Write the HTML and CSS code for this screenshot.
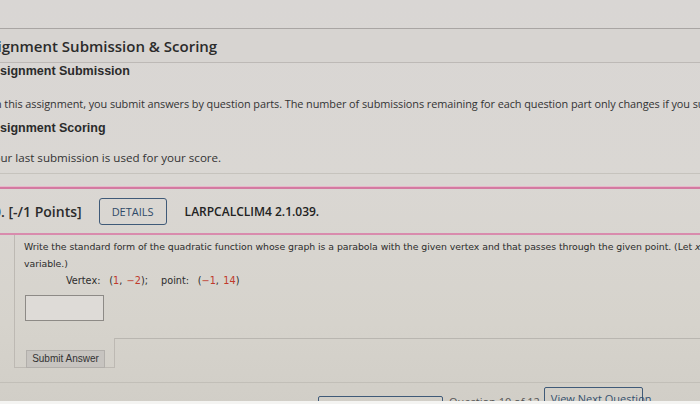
FILE: index.html
```html
<!DOCTYPE html>
<html>
<head>
<meta charset="utf-8">
<link rel="stylesheet" href="styles.css">
</head>
<body>
<div class="page">
  <div class="topbar"></div>
  <div class="sechead"><h1>Assignment Submission &amp; Scoring</h1></div>
  <div class="info">
    <h2 class="sub">Assignment Submission</h2>
    <p class="txt one">In this assignment, you submit answers by question parts. The number of submissions remaining for each question part only changes if you submit or change the answer.</p>
    <h2 class="sub second">Assignment Scoring</h2>
    <p class="txt two">Your last submission is used for your score.</p>
  </div>
  <div class="rule-grey"></div>
  <div class="rule-pink"></div>
  <div class="qhead">
    <span class="pts">10. [-/1 Points]</span>
    <span class="details">DETAILS</span>
    <span class="qid">LARPCALCLIM4 2.1.039.</span>
  </div>
  <div class="rule-pink thin"></div>
  <div class="qbody">
    <p class="qtext">Write the standard form of the quadratic function whose graph is a parabola with the given vertex and that passes through the given point. (Let <i>x</i> be the independent variable.)</p>
    <p class="given">Vertex: &nbsp;(<span class="red">1</span>, <span class="red">−2</span>); &nbsp; point: &nbsp;(<span class="red">−1</span>, <span class="red">14</span>)</p>
    <div class="answer"></div>
  </div>
  <div class="qfoot">
    <div class="submit-cell"><span class="submit">Submit Answer</span></div>
    <div class="fill"></div>
  </div>
  <div class="rule-bottom"></div>
  <div class="nav">
    <span class="navbtn prev">View Previous Question</span>
    <span class="count">Question 10 of 12</span>
    <span class="navbtn next">View Next Question</span>
  </div>
  <div class="whitestrip"></div>
</div>
</body>
</html>
```
FILE: styles.css
```css
html, body {
  margin: 0;
  padding: 0;
}
body {
  width: 700px;
  height: 404px;
  overflow: hidden;
  background: #d8d5d1;
  font-family: "Open Sans", "Liberation Sans", sans-serif;
  color: #2a2a2a;
}
.page {
  width: 700px;
  height: 404px;
  overflow: hidden;
  background: linear-gradient(180deg, #d9d6d4 0%, #dad7d3 45%, #d6d3cc 80%, #d1cec7 100%);
  position: relative;
}
.topbar {
  height: 28px;
  border-bottom: 1px solid #a9a5a3;
}
.sechead {
  height: 33px;
  border-bottom: 1px solid #bdb9b6;
  background: #d7d4d1;
  display: flex;
  align-items: center;
}
h1 {
  margin: 0 0 0 -27px;
  font-size: 15px;
  font-weight: 600;
  white-space: nowrap;
  color: #2b2b2b;
}
.info {
  margin-left: -16px;
  white-space: nowrap;
}
.sub {
  margin: 0;
  font-family: "Liberation Sans", Arial, sans-serif;
  font-weight: bold;
  font-size: 12.5px;
  color: #2b2b2b;
  height: 16px;
  line-height: 16px;
}
.sub.second {
  margin-top: 8px;
}
.txt {
  margin: 0;
  line-height: 16px;
  color: #333;
}
.txt.one {
  margin-top: 17px;
  margin-left: 8px;
  font-size: 10.9px;
  letter-spacing: -0.07px;
}
.txt.two {
  margin-top: 14px;
  margin-left: 3px;
  font-size: 11.6px;
}
.rule-grey {
  margin-top: 7px;
  height: 1px;
  background: #c6c3bd;
}
.rule-pink {
  margin-top: 12px;
  height: 1px;
  background: #e6b8ca;
  border-bottom: 2px solid #d47aa1;
}
.rule-pink.thin {
  margin-top: 8px;
  height: 0;
  border-bottom: 2px solid #d98bad;
  background: none;
}
.qhead {
  margin-top: 9px;
  display: flex;
  align-items: center;
  height: 27px;
  margin-left: -15px;
  white-space: nowrap;
}
.pts {
  font-size: 14px;
  font-weight: 600;
  color: #2b2b2b;
}
.details {
  margin-left: 17px;
  width: 68px;
  height: 27px;
  box-sizing: border-box;
  border: 1.5px solid #3f5a78;
  border-radius: 3px;
  display: flex;
  align-items: center;
  justify-content: center;
  font-size: 11px;
  font-weight: 500;
  color: #2f4a68;
}
.qid {
  margin-left: 18px;
  font-size: 12px;
  font-weight: 600;
  color: #222;
}
.qbody {
  margin-left: 14px;
  border-left: 1px solid #bdb9b3;
  padding: 3px 0 0 9px;
  height: 100px;
  white-space: nowrap;
}
.qtext {
  margin: 0;
  width: 800px;
  white-space: normal;
  font-family: "DejaVu Sans", Verdana, sans-serif;
  font-size: 9.35px;
  line-height: 17px;
  color: #2c2c2c;
  letter-spacing: -0.05px;
}
.given {
  margin: 1px 0 0 42px;
  font-family: "DejaVu Sans", Verdana, sans-serif;
  font-size: 9.7px;
  word-spacing: 1.3px;
  line-height: 16px;
  color: #2c2c2c;
}
.red { color: #c0392b; }
.answer {
  margin: 6px 0 0 1px;
  width: 79px;
  height: 26px;
  box-sizing: border-box;
  border: 1px solid #8d8a86;
  background: #dedbd7;
}
.qfoot {
  display: flex;
  height: 30px;
}
.submit-cell {
  margin-left: 14px;
  width: 101px;
  border-left: 1px solid #bdb9b3;
  border-right: 1px solid #bdb9b3;
  border-bottom: 1px solid #bdb9b3;
  padding: 7px 0 0 11px;
  box-sizing: border-box;
}
.submit {
  display: inline-block;
  width: 79px;
  height: 18px;
  box-sizing: border-box;
  background: #c7c4c0;
  border: 1px solid #b2afab;
  font-family: "Liberation Sans", Arial, sans-serif;
  font-size: 10px;
  line-height: 16px;
  text-align: center;
  color: #333;
}
.fill {
  flex: 1;
  border-top: 1px solid #b9b6b0;
}
.rule-bottom {
  margin-top: 14px;
  height: 1px;
  background: #c2bfb8;
}
.nav {
  display: flex;
  align-items: flex-start;
  white-space: nowrap;
  margin-top: 4px;
  height: 20px;
}
.navbtn {
  border: 1.5px solid #3f5a78;
  border-radius: 2px;
  font-size: 11px;
  color: #34506e;
  height: 18px;
  line-height: 18px;
  box-sizing: border-box;
  padding: 0 6px;
}
.prev {
  margin-left: 318px;
  margin-top: 9px;
  width: 125px;
  color: transparent;
}
.count {
  margin-left: 6px;
  margin-top: 8px;
  font-size: 11px;
  color: #555;
  line-height: 14px;
}
.next {
  margin-left: 4px;
  width: 99px;
  height: 20px;
  padding-top: 2px;
}
.whitestrip {
  position: absolute;
  left: 0;
  right: 0;
  bottom: 0;
  height: 3px;
  background: #f4f4f2;
}
```
